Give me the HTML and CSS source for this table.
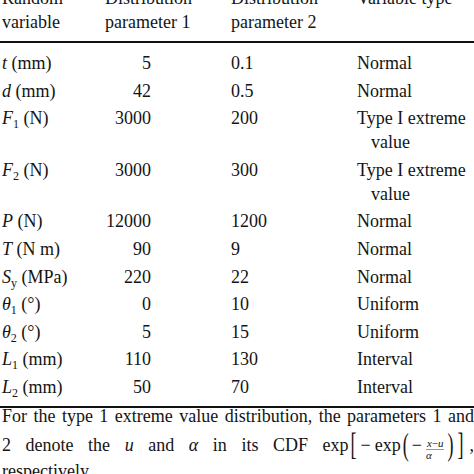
FILE: index.html
```html
<!DOCTYPE html>
<html lang="en">
<head>
<meta charset="utf-8">
<title>Random variables</title>
<link rel="stylesheet" href="styles.css">
</head>
<body>
<div class="page">
  <div class="row thead">
    <div class="c1">Random<br>variable</div>
    <div class="c2">Distribution<br>parameter 1</div>
    <div class="c3">Distribution<br>parameter 2</div>
    <div class="c4">Variable type</div>
  </div>
  <div class="tbody">
    <div class="row"><div class="c1"><i>t</i> (mm)</div><div class="c2 num">5</div><div class="c3">0.1</div><div class="c4">Normal</div></div>
    <div class="row"><div class="c1"><i>d</i> (mm)</div><div class="c2 num">42</div><div class="c3">0.5</div><div class="c4">Normal</div></div>
    <div class="row"><div class="c1"><i>F</i><sub>1</sub> (N)</div><div class="c2 num">3000</div><div class="c3">200</div><div class="c4">Type I extreme value</div></div>
    <div class="row"><div class="c1"><i>F</i><sub>2</sub> (N)</div><div class="c2 num">3000</div><div class="c3">300</div><div class="c4">Type I extreme value</div></div>
    <div class="row"><div class="c1"><i>P</i> (N)</div><div class="c2 num">12000</div><div class="c3">1200</div><div class="c4">Normal</div></div>
    <div class="row"><div class="c1"><i>T</i> (N m)</div><div class="c2 num">90</div><div class="c3">9</div><div class="c4">Normal</div></div>
    <div class="row"><div class="c1"><i>S</i><sub>y</sub> (MPa)</div><div class="c2 num">220</div><div class="c3">22</div><div class="c4">Normal</div></div>
    <div class="row"><div class="c1"><i>θ</i><sub>1</sub> (°)</div><div class="c2 num">0</div><div class="c3">10</div><div class="c4">Uniform</div></div>
    <div class="row"><div class="c1"><i>θ</i><sub>2</sub> (°)</div><div class="c2 num">5</div><div class="c3">15</div><div class="c4">Uniform</div></div>
    <div class="row"><div class="c1"><i>L</i><sub>1</sub> (mm)</div><div class="c2 num">110</div><div class="c3">130</div><div class="c4">Interval</div></div>
    <div class="row"><div class="c1"><i>L</i><sub>2</sub> (mm)</div><div class="c2 num">50</div><div class="c3">70</div><div class="c4">Interval</div></div>
  </div>
  <div class="note">
    <div class="l1">For the type 1 extreme value distribution, the parameters 1 and</div>
    <div class="l2">2 denote the <i>u</i> and <i>α</i> in its CDF <span class="formula">exp<span class="br">[</span><span class="op">−</span>exp<span class="br">(</span><span class="op2">−</span><span class="frac"><span class="fn"><i>x</i>−<i>u</i></span><span class="fd"><i>α</i></span></span><span class="br">)</span><span class="br">]</span><span class="comma">,</span></span></div>
    <div class="l3">respectively.</div>
  </div>
</div>
</body>
</html>
```

FILE: styles.css
```css
html, body {
  margin: 0;
  padding: 0;
  background: #ffffff;
  overflow: hidden;
}

body {
  font-family: "Liberation Serif", "Times New Roman", serif;
  font-size: 18px;
  color: #141414;
}

.page {
  width: 474px;
}

.row {
  display: grid;
  grid-template-columns: 105px 126px 126px 117px;
  line-height: 24px;
  padding: 1.8px 0;
}

.thead {
  margin-top: -14px;
  padding: 0 0 6.5px;
  border-bottom: 2px solid #111;
}

.tbody {
  padding: 6.7px 0 5.2px;
  border-bottom: 2px solid #111;
}

.c1 {
  padding-left: 2px;
  white-space: nowrap;
}

.num {
  text-align: right;
  padding-right: 80px;
}

.c4 {
  padding-left: 14px;
  text-indent: -14px;
}

sub {
  font-size: 12px;
  line-height: 0;
  vertical-align: -4px;
}

.note {
  padding-left: 2px;
}

.l1 {
  line-height: 16px;
  text-align: justify;
  text-align-last: justify;
}

.l2 {
  margin-top: 9px;
  line-height: 25px;
  text-align: justify;
  text-align-last: justify;
}

.l3 {
  line-height: 26px;
}

.formula {
  display: inline-block;
  white-space: nowrap;
}

.br {
  display: inline-block;
  transform: scaleY(1.7);
  margin: 0 2px;
}

.op {
  margin: 0 4px 0 2px;
}

.op2 {
  margin: 0 3px 0 1px;
}

.frac {
  display: inline-block;
  font-size: 11px;
  line-height: 9px;
  text-align: center;
  vertical-align: -8.5px;
  margin: 0 1px -4px;
}

.fn {
  display: block;
  padding: 0 1px 1px;
  border-bottom: 0.8px solid #999;
}

.fd {
  display: block;
  padding-top: 1px;
}

.comma {
  margin-left: 4px;
}
```
